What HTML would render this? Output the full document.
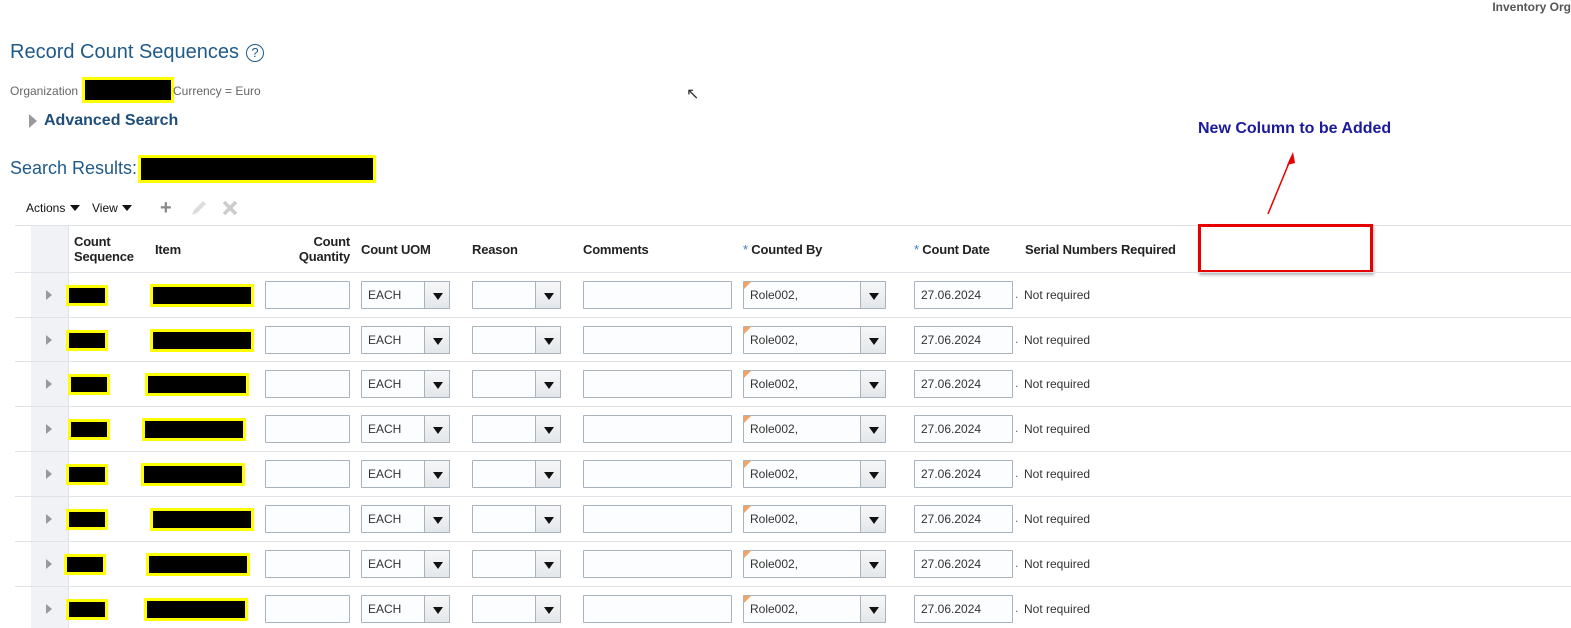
<!DOCTYPE html>
<html><head><meta charset="utf-8"><style>
*{margin:0;padding:0;box-sizing:border-box}
body{width:1571px;height:628px;overflow:hidden;background:#fff;font-family:"Liberation Sans",Arial,sans-serif;position:relative}
.a{position:absolute;white-space:nowrap}
.hd{font-size:13px;font-weight:bold;color:#222;position:absolute;line-height:15px;letter-spacing:-0.2px}
.in{position:absolute;height:28px;border:1px solid #a9b3bd;background:#fcfdfe;border-radius:1px;font-size:12px;color:#333;padding:0 6px;line-height:26px}
.btn{position:absolute;top:-1px;right:-1px;width:26px;height:28px;border:1px solid #a9b3bd;background:linear-gradient(#f6f7f8,#e4e7ea)}
.btn:after{content:"";position:absolute;left:8px;top:11px;border-left:5px solid transparent;border-right:5px solid transparent;border-top:7px solid #111}
.blk{position:absolute;background:#000;border:3px solid #ffff00}
.sep{position:absolute;left:15px;width:1556px;height:1px;background:#dfe3e8}
.tri{position:absolute;border-top:5px solid transparent;border-bottom:5px solid transparent;border-left:6px solid #999}
.star{color:#3a7bbf;font-weight:normal}
</style></head><body>
<div class="a" style="right:0;top:0;font-size:12px;font-weight:bold;color:#555">Inventory Org</div>
<div class="a" style="left:10px;top:41px;font-size:20px;color:#1f5a8a">Record Count Sequences</div>
<div class="a" style="left:246px;top:44px;width:18px;height:18px;border:1.5px solid #1f5a8a;border-radius:50%;font-size:13px;color:#1f5a8a;text-align:center;line-height:16px">?</div>
<div class="a" style="left:10px;top:84px;font-size:12px;color:#666">Organization</div>
<div class="blk" style="left:82px;top:77px;width:92px;height:26px"></div>
<div class="a" style="left:173px;top:84px;font-size:12px;color:#666">Currency = Euro</div>
<div class="a" style="left:29px;top:114px;border-top:7px solid transparent;border-bottom:7px solid transparent;border-left:8px solid #999"></div>
<div class="a" style="left:44px;top:112px;font-size:16px;font-weight:bold;color:#1f4e79">Advanced Search</div>
<div class="a" style="left:10px;top:158px;font-size:18px;color:#1f5a8a">Search Results:</div>
<div class="blk" style="left:138px;top:155px;width:238px;height:28px"></div>
<div class="a" style="left:26px;top:201px;font-size:12px;color:#111">Actions</div>
<div class="a" style="left:70px;top:205px;border-left:5px solid transparent;border-right:5px solid transparent;border-top:6px solid #111"></div>
<div class="a" style="left:92px;top:201px;font-size:12px;color:#111">View</div>
<div class="a" style="left:122px;top:205px;border-left:5px solid transparent;border-right:5px solid transparent;border-top:6px solid #111"></div>
<div class="a" style="left:160px;top:199px;font-size:20px;font-weight:bold;color:#888;line-height:18px">+</div>
<svg class="a" style="left:189px;top:199px" width="20" height="18"><path d="M3 16 L5 11 L14 2 L17 5 L8 14 Z" fill="#ddd"/></svg>
<svg class="a" style="left:222px;top:200px" width="16" height="16"><path d="M2 2 L14 14 M14 2 L2 14" stroke="#ccc" stroke-width="3.5"/></svg>
<div class="sep" style="top:225px"></div>
<div class="a" style="left:31px;top:226px;width:37px;height:402px;background:#f0f2f5"></div>
<div class="a" style="left:68px;top:226px;width:1px;height:402px;background:#dfe3e8"></div>
<div class="hd" style="left:74px;top:234px">Count<br>Sequence</div>
<div class="hd" style="left:155px;top:242px">Item</div>
<div class="hd" style="left:290px;top:234px;text-align:right;width:60px">Count<br>Quantity</div>
<div class="hd" style="left:361px;top:242px">Count UOM</div>
<div class="hd" style="left:472px;top:242px">Reason</div>
<div class="hd" style="left:583px;top:242px">Comments</div>
<div class="hd" style="left:743px;top:242px"><span class="star">*</span> Counted By</div>
<div class="hd" style="left:914px;top:242px"><span class="star">*</span> Count Date</div>
<div class="hd" style="left:1025px;top:242px">Serial Numbers Required</div>
<div class="a" style="left:1198px;top:224px;width:175px;height:49px;border:3px solid #e60000;box-shadow:1px 2px 3px rgba(0,0,0,.3)"></div>
<div class="a" style="left:1198px;top:120px;font-size:16px;font-weight:bold;color:#1a1a9a">New Column to be Added</div>
<svg class="a" style="left:1260px;top:148px" width="40" height="70"><path d="M8 66 L31 10" stroke="#e60000" stroke-width="1.5"/><path d="M33 4 L27 17 L35 15 Z" fill="#e60000"/></svg>
<div class="a" style="left:686px;top:84px;font-size:16px;color:#333">&#8598;</div>
<div id="rows"></div>
<script>
var ys=[295,340,384,429,474,519,564,609];
var seq=[[66,42],[66,42],[68,42],[68,42],[66,42],[66,42],[64,42],[66,42]];
var it=[[150,104],[150,104],[145,104],[142,104],[141,104],[150,104],[146,104],[144,104]];
var h='';
ys.forEach(function(y,i){
 h+='<div class="sep" style="top:'+(y-23)+'px"></div>';
 h+='<div class="tri" style="left:46px;top:'+(y-5)+'px"></div>';
 h+='<div class="blk" style="left:'+seq[i][0]+'px;top:'+(y-10)+'px;width:'+seq[i][1]+'px;height:21px"></div>';
 h+='<div class="blk" style="left:'+it[i][0]+'px;top:'+(y-11)+'px;width:'+it[i][1]+'px;height:23px"></div>';
 h+='<div class="in" style="left:265px;top:'+(y-14)+'px;width:85px"></div>';
 h+='<div class="in" style="left:361px;top:'+(y-14)+'px;width:89px">EACH<div class="btn"></div></div>';
 h+='<div class="in" style="left:472px;top:'+(y-14)+'px;width:89px"><div class="btn"></div></div>';
 h+='<div class="in" style="left:583px;top:'+(y-14)+'px;width:149px"></div>';
 h+='<div class="in" style="left:743px;top:'+(y-14)+'px;width:143px">Role002,<div class="btn"></div><div style="position:absolute;left:0;top:0;border-top:7px solid #f4a460;border-right:7px solid transparent"></div></div>';
 h+='<div class="in" style="left:914px;top:'+(y-14)+'px;width:99px">27.06.2024</div>';
 h+='<div class="a" style="left:1015px;top:'+(y-8)+'px;font-size:12px;color:#666">.</div>';
 h+='<div class="a" style="left:1024px;top:'+(y-7)+'px;font-size:12px;color:#333">Not required</div>';
});
document.getElementById('rows').innerHTML=h;
</script>
</body></html>
